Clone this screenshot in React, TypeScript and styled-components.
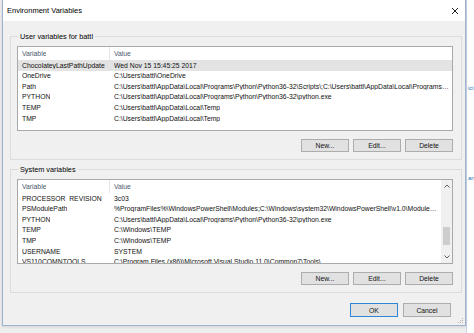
import styled, { createGlobalStyle } from "styled-components";

const GlobalStyle = createGlobalStyle`
  body {
    margin: 0;
    background: #f0f0f0;
  }
`;

const Page = styled.div`
  width: 474px;
  height: 333px;
  overflow: hidden;
  display: flex;
  align-items: flex-start;
  background: #eeeeee;
  font-family: "Liberation Sans", Arial, sans-serif;
  font-size: 6.8px;
  color: #1a1a1a;
`;

const Window = styled.div`
  position: relative;
  box-sizing: border-box;
  margin-left: 2px;
  width: 464px;
  height: 326px;
  display: flex;
  flex-direction: column;
  border: 1px solid #9db2cf;
  border-top: none;
  box-shadow: 0 1px 3px rgba(0, 0, 0, 0.12);
`;

const TitleBar = styled.div`
  height: 21px;
  flex-shrink: 0;
  display: flex;
  align-items: center;
  justify-content: space-between;
  padding: 0 4px 0 4px;
  background: #ffffff;
  font-size: 7.5px;
  color: #000;
`;

const Body = styled.div`
  flex: 1;
  display: flex;
  flex-direction: column;
  background: #f0f0f0;
  padding-top: 11px;
`;

const Group = styled.fieldset<{ $gap?: number }>`
  margin: ${({ $gap }) => $gap ?? 0}px 3px 0 7px;
  padding: 5px 8px 7px 6px;
  border: 1px solid #dcdcdc;
  min-width: 0;
`;

const Legend = styled.legend`
  padding: 0 2px;
  margin-left: 1px;
  line-height: 9px;
  font-size: 7.3px;
  color: #000;
`;

const List = styled.div`
  height: 85px;
  box-sizing: border-box;
  display: flex;
  border: 1px solid #a9a9a9;
  background: #ffffff;
  overflow: hidden;
`;

const Rows = styled.div`
  flex: 1;
  min-width: 0;
  display: flex;
  flex-direction: column;
`;

const Row = styled.div<{ $selected?: boolean; $header?: boolean }>`
  display: grid;
  grid-template-columns: 92px 1fr;
  height: ${({ $header }) => ($header ? 13 : 10.55)}px;
  flex-shrink: 0;
  align-items: center;
  background: ${({ $selected }) => ($selected ? "#e3e3e3" : "transparent")};
  color: ${({ $header }) => ($header ? "#4c5a6e" : "#111")};
`;

const Cell = styled.div<{ $sep?: boolean }>`
  height: 100%;
  display: flex;
  align-items: center;
  padding-left: 4px;
  padding-right: 3px;
  min-width: 0;
  box-sizing: border-box;
  border-right: ${({ $sep }) => ($sep ? "1px solid #e5e5e5" : "none")};
  span {
    white-space: nowrap;
    overflow: hidden;
    text-overflow: ellipsis;
  }
`;

const Scrollbar = styled.div`
  width: 11px;
  flex-shrink: 0;
  display: flex;
  flex-direction: column;
  background: #f0f0f0;
`;

const ArrowBox = styled.div`
  height: 12px;
  flex-shrink: 0;
  display: flex;
  align-items: center;
  justify-content: center;
`;

const Track = styled.div`
  flex: 1;
`;

const Thumb = styled.div<{ $offset: number; $size: number }>`
  margin: ${({ $offset }) => $offset}px 2px 0 2px;
  height: ${({ $size }) => $size}px;
  background: #cdcdcd;
`;

const ButtonRow = styled.div<{ $top: number }>`
  display: flex;
  justify-content: flex-end;
  gap: 4px;
  margin-top: ${({ $top }) => $top}px;
`;

const Button = styled.div<{ $default?: boolean }>`
  box-sizing: border-box;
  width: 48px;
  height: 13px;
  display: flex;
  align-items: center;
  justify-content: center;
  background: #e1e1e1;
  border: 1px solid ${({ $default }) => ($default ? "#2f86d6" : "#adadad")};
  color: #111;
`;

const Footer = styled.div`
  display: flex;
  justify-content: flex-end;
  gap: 5px;
  padding: 10px 14px 0 0;
  ${Button} {
    height: 14px;
  }
`;

const Grip = styled.svg`
  position: absolute;
  right: 1px;
  bottom: 1px;
`;

const Behind = styled.div`
  flex: 1;
  align-self: stretch;
  background: #ffffff;
  display: flex;
  flex-direction: column;
  overflow: hidden;
  border-left: 1px solid #c9d6e6;
`;

const BehindText = styled.div<{ $top: number }>`
  margin-top: ${({ $top }) => $top}px;
  padding-left: 1px;
  color: #2a74c4;
  font-size: 6px;
  white-space: nowrap;
`;

type Variable = { name: string; value: string };

const userVars: Variable[] = [
  { name: "ChocolateyLastPathUpdate", value: "Wed Nov 15 15:45:25 2017" },
  { name: "OneDrive", value: "C:\\Users\\battl\\OneDrive" },
  {
    name: "Path",
    value:
      "C:\\Users\\battl\\AppData\\Local\\Programs\\Python\\Python36-32\\Scripts\\;C:\\Users\\battl\\AppData\\Local\\Programs\\Python\\Python36-32\\;C:\\Users",
  },
  {
    name: "PYTHON",
    value: "C:\\Users\\battl\\AppData\\Local\\Programs\\Python\\Python36-32\\python.exe",
  },
  { name: "TEMP", value: "C:\\Users\\battl\\AppData\\Local\\Temp" },
  { name: "TMP", value: "C:\\Users\\battl\\AppData\\Local\\Temp" },
];

const systemVars: Variable[] = [
  { name: "PROCESSOR_REVISION", value: "3c03" },
  {
    name: "PSModulePath",
    value:
      "%ProgramFiles%\\WindowsPowerShell\\Modules;C:\\Windows\\system32\\WindowsPowerShell\\v1.0\\Modules;C:\\Program Files",
  },
  {
    name: "PYTHON",
    value: "C:\\Users\\battl\\AppData\\Local\\Programs\\Python\\Python36-32\\python.exe",
  },
  { name: "TEMP", value: "C:\\Windows\\TEMP" },
  { name: "TMP", value: "C:\\Windows\\TEMP" },
  { name: "USERNAME", value: "SYSTEM" },
  {
    name: "VS110COMNTOOLS",
    value: "C:\\Program Files (x86)\\Microsoft Visual Studio 11.0\\Common7\\Tools\\",
  },
];

const Chevron = ({ up }: { up?: boolean }) => (
  <svg width="6" height="4" viewBox="0 0 6 4">
    <path
      d={up ? "M0.5 3.5 L3 1 L5.5 3.5" : "M0.5 0.5 L3 3 L5.5 0.5"}
      fill="none"
      stroke="#606060"
      strokeWidth="1"
    />
  </svg>
);

const VarTable = ({
  vars,
  selected,
  scroll,
}: {
  vars: Variable[];
  selected?: number;
  scroll?: boolean;
}) => (
  <List>
    <Rows>
      <Row $header>
        <Cell $sep>
          <span>Variable</span>
        </Cell>
        <Cell>
          <span>Value</span>
        </Cell>
      </Row>
      {vars.map((v, i) => (
        <Row key={v.name + i} $selected={i === selected}>
          <Cell>
            <span>{v.name}</span>
          </Cell>
          <Cell>
            <span>{v.value}</span>
          </Cell>
        </Row>
      ))}
    </Rows>
    {scroll && (
      <Scrollbar>
        <ArrowBox>
          <Chevron up />
        </ArrowBox>
        <Track>
          <Thumb $offset={35} $size={18} />
        </Track>
        <ArrowBox>
          <Chevron />
        </ArrowBox>
      </Scrollbar>
    )}
  </List>
);

const ActionButtons = ({ top }: { top: number }) => (
  <ButtonRow $top={top}>
    <Button>New...</Button>
    <Button>Edit...</Button>
    <Button>Delete</Button>
  </ButtonRow>
);

export default function App() {
  return (
    <Page>
      <GlobalStyle />
      <Window>
        <TitleBar>
          <span>Environment Variables</span>
          <svg width="12" height="12" viewBox="0 0 12 12">
            <path d="M3 3 L9 9 M9 3 L3 9" stroke="#222" strokeWidth="1" />
          </svg>
        </TitleBar>
        <Body>
          <Group>
            <Legend>User variables for battl</Legend>
            <VarTable vars={userVars} selected={0} />
            <ActionButtons top={8} />
          </Group>
          <Group $gap={5}>
            <Legend>System variables</Legend>
            <VarTable vars={systemVars} scroll />
            <ActionButtons top={8} />
          </Group>
          <Footer>
            <Button $default>OK</Button>
            <Button>Cancel</Button>
          </Footer>
        </Body>
        <Grip width="8" height="8" viewBox="0 0 8 8">
          <rect x="6" y="2" width="1" height="1" fill="#b5b5b5" />
          <rect x="4" y="4" width="1" height="1" fill="#b5b5b5" />
          <rect x="6" y="4" width="1" height="1" fill="#b5b5b5" />
          <rect x="2" y="6" width="1" height="1" fill="#b5b5b5" />
          <rect x="4" y="6" width="1" height="1" fill="#b5b5b5" />
          <rect x="6" y="6" width="1" height="1" fill="#b5b5b5" />
        </Grip>
      </Window>
      <Behind>
        <BehindText $top={85}>ici</BehindText>
        <BehindText $top={84}>ano</BehindText>
      </Behind>
    </Page>
  );
}
